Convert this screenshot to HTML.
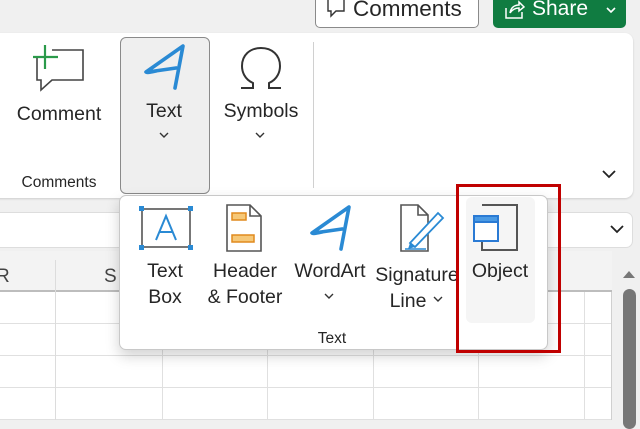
<!DOCTYPE html>
<html><head><style>
*{margin:0;padding:0;box-sizing:border-box}
body{width:640px;height:420px;overflow:hidden;background:#f0f0f0;font-family:"Liberation Sans",sans-serif;color:#262626;position:relative}
.a{position:absolute}
.lbl{position:absolute;font-size:19.5px;text-align:center;white-space:nowrap;line-height:26px;width:120px}
</style></head><body>
<!-- top buttons -->
<div class="a" style="left:315px;top:-6px;width:164px;height:34px;background:#fff;border:1px solid #8a8a8a;border-radius:5px"></div>
<svg class="a" style="left:327px;top:0" width="20" height="18"><path d="M1 0 V11 H4 V16 L9 11 H17 V0" fill="none" stroke="#333" stroke-width="1.4"/></svg>
<div class="lbl" style="left:353px;top:-4px;font-size:22.5px;text-align:left">Comments</div>
<div class="a" style="left:493px;top:-6px;width:133px;height:34px;background:#107c41;border-radius:5px"></div>
<svg class="a" style="left:504px;top:0" width="22" height="20"><path d="M2 8 V18 H18 V12 M6 13 C7 7 11 5 15 5 V2 L20 7 L15 11 V8 C11 8 8 10 6 13" fill="none" stroke="#fff" stroke-width="1.5"/></svg>
<div class="lbl" style="left:532px;top:-4px;font-size:21px;color:#fff;text-align:left">Share</div>
<svg class="a" style="left:605px;top:6px" width="12" height="8"><path d="M2 2 L6 6 L10 2" fill="none" stroke="#fff" stroke-width="1.6"/></svg>
<!-- ribbon -->
<div class="a" style="left:-10px;top:33px;width:643px;height:165px;background:#fff;border-radius:8px;box-shadow:0 1px 2px rgba(0,0,0,.15)"></div>
<svg class="a" style="left:32px;top:42px" width="56" height="50"><path d="M5 15 V38 H9 V48 L20 38 H51 V8 H20" fill="none" stroke="#444" stroke-width="1.6"/><path d="M1 15 H26 M13 3 V27" stroke="#2a9a4a" stroke-width="2.2"/></svg>
<div class="lbl" style="left:-1px;top:101px">Comment</div>
<div class="lbl" style="left:-1px;top:170px;font-size:15.5px">Comments</div>
<div class="a" style="left:120px;top:37px;width:90px;height:157px;background:#efefef;border:1px solid #8a8a8a;border-radius:6px"></div>
<svg class="a" style="left:142px;top:42px" width="44" height="50"><path d="M14 29 C9 30 5 31 4 30 L41 4 L33 46 M6 30 L34 26" fill="none" stroke="#2a8ad4" stroke-width="3.6" stroke-linecap="round" stroke-linejoin="round"/></svg>
<div class="lbl" style="left:104px;top:98px">Text</div>
<svg class="a" style="left:158px;top:131px" width="12" height="8"><path d="M2 2 L6 6 L10 2" fill="none" stroke="#333" stroke-width="1.4"/></svg>
<svg class="a" style="left:238px;top:46px" width="46" height="44"><path d="M3 42 H15 V37 C6 33 4 25 4 20 C4 9 12 2 23 2 C34 2 42 9 42 20 C42 25 40 33 31 37 V42 H43" fill="none" stroke="#333" stroke-width="2"/></svg>
<div class="lbl" style="left:201px;top:98px">Symbols</div>
<svg class="a" style="left:254px;top:131px" width="12" height="8"><path d="M2 2 L6 6 L10 2" fill="none" stroke="#333" stroke-width="1.4"/></svg>
<div class="a" style="left:313px;top:42px;width:1px;height:146px;background:#d0d0d0"></div>
<svg class="a" style="left:601px;top:169px" width="16" height="10"><path d="M2 2 L8 8 L14 2" fill="none" stroke="#222" stroke-width="1.8"/></svg>
<!-- formula bar -->
<div class="a" style="left:-10px;top:212px;width:643px;height:36px;background:#fff;border:1px solid #ddd;border-radius:7px"></div>
<svg class="a" style="left:609px;top:224px" width="16" height="10"><path d="M2 2 L8 8 L14 2" fill="none" stroke="#222" stroke-width="1.8"/></svg>
<!-- grid -->
<div class="a" style="left:0;top:251px;width:612px;height:41px;background:#f3f3f3;border-bottom:2px solid #bdbdbd"></div>
<div class="lbl" style="left:-4px;top:264px;font-size:19px;color:#444;width:auto">R</div>
<div class="lbl" style="left:104px;top:264px;font-size:19px;color:#444;width:auto">S</div>
<div class="a" style="left:0;top:292px;width:612px;height:128px;background:#fff"></div>
<div class="a" style="left:0;top:323px;width:612px;height:1px;background:#e0e0e0"></div>
<div class="a" style="left:0;top:355px;width:612px;height:1px;background:#e0e0e0"></div>
<div class="a" style="left:0;top:387px;width:612px;height:1px;background:#e0e0e0"></div>
<div class="a" style="left:0;top:419px;width:612px;height:1px;background:#e0e0e0"></div>
<div class="a" style="left:55px;top:260px;width:1px;height:160px;background:#dcdcdc"></div>
<div class="a" style="left:162px;top:292px;width:1px;height:128px;background:#e0e0e0"></div>
<div class="a" style="left:267px;top:292px;width:1px;height:128px;background:#e0e0e0"></div>
<div class="a" style="left:373px;top:292px;width:1px;height:128px;background:#e0e0e0"></div>
<div class="a" style="left:478px;top:292px;width:1px;height:128px;background:#e0e0e0"></div>
<div class="a" style="left:584px;top:292px;width:1px;height:128px;background:#e0e0e0"></div>
<div class="a" style="left:611px;top:292px;width:1px;height:128px;background:#d0d0d0"></div>
<!-- scrollbar -->
<div class="a" style="left:618px;top:260px;width:22px;height:160px;background:#f0f0f0"></div>
<svg class="a" style="left:621px;top:268px" width="16" height="12"><path d="M2 10 L8 3 L14 10 Z" fill="#777"/></svg>
<div class="a" style="left:623px;top:289px;width:13px;height:140px;background:#777;border-radius:7px"></div>
<!-- dropdown -->
<div class="a" style="left:119px;top:195px;width:429px;height:155px;background:#fff;border:1px solid #c8c8c8;border-radius:7px;box-shadow:0 6px 14px rgba(0,0,0,.18)"></div>
<div class="a" style="left:466px;top:197px;width:69px;height:126px;background:#f5f5f5;border-radius:6px"></div>
<svg class="a" style="left:138px;top:205px" width="56" height="46"><rect x="4" y="4" width="48" height="38" fill="none" stroke="#555" stroke-width="1.6"/><g fill="#2a8ad4"><rect x="1" y="1" width="5" height="5"/><rect x="50" y="1" width="5" height="5"/><rect x="1" y="40" width="5" height="5"/><rect x="50" y="40" width="5" height="5"/></g><path d="M18 35 L28 11 L38 35 M22 27 H34" fill="none" stroke="#2a8ad4" stroke-width="2"/></svg>
<div class="lbl" style="left:105px;top:258px">Text</div>
<div class="lbl" style="left:105px;top:284px">Box</div>
<svg class="a" style="left:224px;top:203px" width="40" height="50"><path d="M3 2 H26 L37 13 V48 H3 Z M26 2 V13 H37" fill="#fff" stroke="#555" stroke-width="1.6"/><rect x="8" y="10" width="14" height="7" fill="#f6c878" stroke="#e08a1e" stroke-width="1.5"/><rect x="8" y="32" width="22" height="7" fill="#f6c878" stroke="#e08a1e" stroke-width="1.5"/></svg>
<div class="lbl" style="left:185px;top:258px">Header</div>
<div class="lbl" style="left:185px;top:284px">&amp; Footer</div>
<svg class="a" style="left:308px;top:203px" width="44" height="50"><path d="M14 29 C9 30 5 31 4 30 L41 4 L33 46 M6 30 L34 26" fill="none" stroke="#2a8ad4" stroke-width="3.6" stroke-linecap="round" stroke-linejoin="round"/></svg>
<div class="lbl" style="left:270px;top:258px">WordArt</div>
<svg class="a" style="left:323px;top:292px" width="12" height="8"><path d="M2 2 L6 6 L10 2" fill="none" stroke="#333" stroke-width="1.4"/></svg>
<svg class="a" style="left:398px;top:203px" width="50" height="50"><path d="M3 2 H20 L30 12 V48 H3 Z M20 2 V12 H30" fill="#fff" stroke="#555" stroke-width="1.6"/><path d="M12 40 L40 10 L45 15 L17 44 Z" fill="#fff" stroke="#2a8ad4" stroke-width="1.8"/><path d="M12 40 L10 46 L17 44 Z" fill="#2a8ad4"/><path d="M7 46 H28" stroke="#2a8ad4" stroke-width="1.6"/></svg>
<div class="lbl" style="left:357px;top:262px">Signature</div>
<div class="lbl" style="left:348px;top:288px">Line</div>
<svg class="a" style="left:432px;top:295px" width="12" height="8"><path d="M2 2 L6 6 L10 2" fill="none" stroke="#333" stroke-width="1.4"/></svg>
<svg class="a" style="left:472px;top:203px" width="50" height="50"><path d="M10 2 H45 V47 H10 V38" fill="none" stroke="#555" stroke-width="2"/><rect x="2" y="13" width="24" height="25" fill="#fff" stroke="#2a7ad4" stroke-width="2"/><rect x="2" y="13" width="24" height="6" fill="#4a9ae4" stroke="#2a7ad4" stroke-width="2"/></svg>
<div class="lbl" style="left:440px;top:258px">Object</div>
<div class="lbl" style="left:272px;top:326px;font-size:15.5px">Text</div>
<!-- red highlight -->
<div class="a" style="left:456px;top:184px;width:105px;height:169px;border:3px solid #c00000"></div>
</body></html>
